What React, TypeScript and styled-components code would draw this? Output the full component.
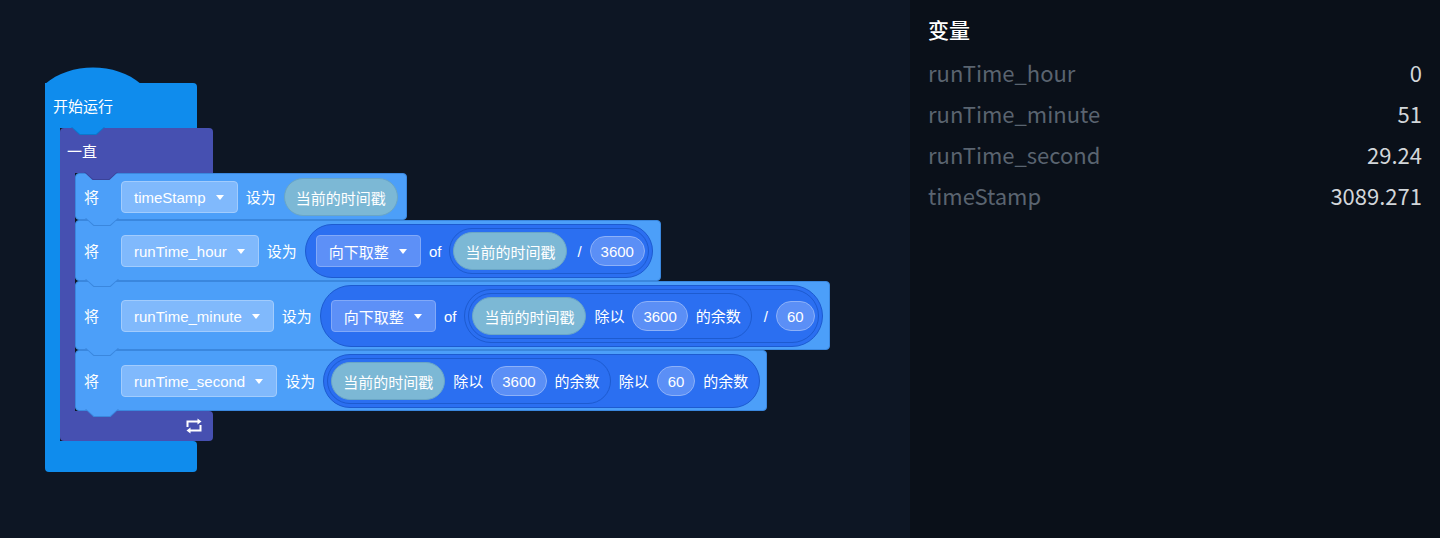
import React from 'react';
import styled, { createGlobalStyle, css } from 'styled-components';

const COLORS = {
  canvas: '#0d1624',
  panel: '#0a1019',
  hat: '#0f8ced',
  hatEdge: '#0b78cc',
  forever: '#4650b1',
  foreverEdge: '#3a4399',
  stmt: '#4c9ff9',
  stmtEdge: '#3a87de',
  field: '#80b9fc',
  fieldEdge: '#a2ccfd',
  opField: '#5d90f7',
  opFieldEdge: '#82a9f8',
  reporter: '#7cb8d5',
  reporterEdge: '#6aa6c6',
  op: '#2b6ff1',
  opEdge: '#1d5bd0',
  num: '#5b8ff6',
  numEdge: '#8db1f8',
};

const GlobalStyle = createGlobalStyle`
  html, body { margin: 0; padding: 0; background: ${COLORS.canvas}; }
  body { font-family: "Liberation Sans", "Noto Sans CJK SC", sans-serif; }
  * { box-sizing: border-box; }
`;

const Page = styled.div`
  display: flex;
  width: 1440px;
  height: 538px;
  overflow: hidden;
`;

const Canvas = styled.main`
  flex: 0 0 910px;
  background: ${COLORS.canvas};
  padding: 83px 0 0 45px;
`;

const tab = (color: string, edge: string, left: number) => css`
  &::before,
  &::after {
    content: '';
    position: absolute;
    top: calc(100% - 1px);
    clip-path: polygon(0 0, 100% 0, 75% 100%, 25% 100%);
    z-index: 3;
    pointer-events: none;
  }
  &::before {
    left: ${left - 1}px;
    width: 34px;
    height: 8px;
    background: ${edge};
  }
  &::after {
    left: ${left}px;
    width: 32px;
    height: 7px;
    background: ${color};
  }
`;

const HatBlock = styled.div`
  position: relative;
  display: flex;
  flex-direction: column;
  align-items: flex-start;
  &::before {
    content: '';
    position: absolute;
    left: 0;
    top: -16px;
    width: 96px;
    height: 17px;
    background: ${COLORS.hat};
    clip-path: path('M0 17 C 25 -5, 71 -5, 96 17 Z');
  }
`;

const CBlock = styled.div`
  display: flex;
  flex-direction: column;
  align-items: flex-start;
`;

type Kind = 'hat' | 'forever';
const kindColor = (k: Kind) => (k === 'hat' ? COLORS.hat : COLORS.forever);
const kindEdge = (k: Kind) => (k === 'hat' ? COLORS.hatEdge : COLORS.foreverEdge);

const CHead = styled.div<{ $kind: Kind }>`
  position: relative;
  display: flex;
  align-items: center;
  width: ${(p) => (p.$kind === 'hat' ? 152 : 153)}px;
  height: 45px;
  padding-left: ${(p) => (p.$kind === 'hat' ? 8 : 7)}px;
  background: ${(p) => kindColor(p.$kind)};
  color: #fff;
  font-size: 15px;
  border-radius: ${(p) => (p.$kind === 'hat' ? '0 4px 0 0' : '4px 4px 0 0')};
  ${(p) => tab(kindColor(p.$kind), kindEdge(p.$kind), p.$kind === 'hat' ? 27 : 25)}
`;

const CMouth = styled.div`
  display: flex;
  align-items: stretch;
`;

const CArm = styled.div<{ $kind: Kind }>`
  flex: 0 0 15px;
  background: ${(p) => kindColor(p.$kind)};
`;

const CFoot = styled.div<{ $kind: Kind }>`
  display: flex;
  align-items: center;
  justify-content: flex-end;
  width: ${(p) => (p.$kind === 'hat' ? 152 : 153)}px;
  height: ${(p) => (p.$kind === 'hat' ? 31 : 30)}px;
  padding-right: 10px;
  background: ${(p) => kindColor(p.$kind)};
  border-radius: 0 4px 4px 4px;
`;

const Stack = styled.div`
  display: flex;
  flex-direction: column;
  align-items: flex-start;
`;

const Statement = styled.div<{ $trail?: number }>`
  position: relative;
  display: flex;
  align-items: center;
  gap: 8px;
  min-height: 47px;
  padding: 3px ${(p) => p.$trail ?? 6}px 2px 8px;
  background: ${COLORS.stmt};
  border: 1px solid ${COLORS.stmtEdge};
  border-radius: 4px;
  color: #fff;
  font-size: 15px;
  white-space: nowrap;
  ${tab(COLORS.stmt, COLORS.stmtEdge, 10)}
`;

const Word = styled.span<{ $after?: number; $before?: number }>`
  color: #fff;
  font-size: 15px;
  line-height: 1;
  margin-left: ${(p) => p.$before ?? 0}px;
  margin-right: ${(p) => p.$after ?? 0}px;
`;

const Dropdown = styled.div<{ $op?: boolean; $inset?: number }>`
  display: inline-flex;
  align-items: center;
  gap: 10px;
  height: 32px;
  padding: 0 13px 0 12px;
  margin-left: ${(p) => p.$inset ?? 0}px;
  background: ${(p) => (p.$op ? COLORS.opField : COLORS.field)};
  border: 1px solid ${(p) => (p.$op ? COLORS.opFieldEdge : COLORS.fieldEdge)};
  border-radius: 4px;
  color: #fff;
  font-size: 15px;
`;

const Caret = styled.span`
  width: 0;
  height: 0;
  border-left: 4.5px solid transparent;
  border-right: 4.5px solid transparent;
  border-top: 5px solid #fff;
`;

const Reporter = styled.div`
  display: inline-flex;
  align-items: center;
  height: 38px;
  padding: 0 11px;
  border-radius: 19px;
  background: ${COLORS.reporter};
  border: 1px solid ${COLORS.reporterEdge};
  color: #fff;
  font-size: 15px;
`;

const NumberPill = styled.div`
  display: inline-flex;
  align-items: center;
  height: 30px;
  padding: 0 10px;
  border-radius: 15px;
  background: ${COLORS.num};
  border: 1px solid ${COLORS.numEdge};
  color: #fff;
  font-size: 15px;
`;

const OpPill = styled.div`
  display: inline-flex;
  align-items: center;
  gap: 8px;
  padding: 3px;
  border-radius: 999px;
  background: ${COLORS.op};
  border: 1px solid ${COLORS.opEdge};
`;

const Panel = styled.aside`
  flex: 1;
  background: ${COLORS.panel};
  padding: 11px 18px 0;
  font-family: "Noto Sans CJK SC", "Noto Sans", sans-serif;
`;

const PanelTitle = styled.h2`
  margin: 0 0 4px;
  height: 36px;
  line-height: 36px;
  font-size: 21px;
  font-weight: 500;
  color: #fff;
`;

const VarRow = styled.div`
  display: flex;
  justify-content: space-between;
  align-items: center;
  height: 41px;
  font-size: 22px;
`;

const VarName = styled.span`
  color: #5a6470;
`;

const VarValue = styled.span`
  color: #d2d6da;
`;

const LoopIcon = () => (
  <svg width="18" height="18" viewBox="0 0 18 18" fill="none">
    <path d="M2.5 9V4.5H13" stroke="#fff" strokeWidth="2" strokeLinecap="square" />
    <path d="M12.5 1.5L16.5 4.5L12.5 7.5Z" fill="#fff" />
    <path d="M15.5 9V13.5H5" stroke="#fff" strokeWidth="2" strokeLinecap="square" />
    <path d="M5.5 10.5L1.5 13.5L5.5 16.5Z" fill="#fff" />
  </svg>
);

const Drop = ({ label, op, inset }: { label: string; op?: boolean; inset?: number }) => (
  <Dropdown $op={op} $inset={inset}>
    <span>{label}</span>
    <Caret />
  </Dropdown>
);

const NOW = '当前的时间戳';

const variables = [
  ['runTime_hour', '0'],
  ['runTime_minute', '51'],
  ['runTime_second', '29.24'],
  ['timeStamp', '3089.271'],
];

export default function App() {
  return (
    <>
      <GlobalStyle />
      <Page>
        <Canvas>
          <HatBlock>
            <CHead $kind="hat">开始运行</CHead>
            <CMouth>
              <CArm $kind="hat" />
              <CBlock>
                <CHead $kind="forever">一直</CHead>
                <CMouth>
                  <CArm $kind="forever" />
                  <Stack>
                    <Statement $trail={8}>
                      <Word $after={14}>将</Word>
                      <Drop label="timeStamp" />
                      <Word>设为</Word>
                      <Reporter>{NOW}</Reporter>
                    </Statement>
                    <Statement $trail={7}>
                      <Word $after={14}>将</Word>
                      <Drop label="runTime_hour" />
                      <Word>设为</Word>
                      <OpPill>
                        <Drop label="向下取整" op inset={7} />
                        <Word>of</Word>
                        <OpPill>
                          <Reporter>{NOW}</Reporter>
                          <Word $before={2}>/</Word>
                          <NumberPill>3600</NumberPill>
                        </OpPill>
                      </OpPill>
                    </Statement>
                    <Statement>
                      <Word $after={14}>将</Word>
                      <Drop label="runTime_minute" />
                      <Word>设为</Word>
                      <OpPill>
                        <Drop label="向下取整" op inset={7} />
                        <Word>of</Word>
                        <OpPill>
                          <OpPill>
                            <Reporter>{NOW}</Reporter>
                            <Word>除以</Word>
                            <NumberPill>3600</NumberPill>
                            <Word $after={7}>的余数</Word>
                          </OpPill>
                          <Word $before={4}>/</Word>
                          <NumberPill>60</NumberPill>
                        </OpPill>
                      </OpPill>
                    </Statement>
                    <Statement>
                      <Word $after={14}>将</Word>
                      <Drop label="runTime_second" />
                      <Word>设为</Word>
                      <OpPill>
                        <OpPill>
                          <Reporter>{NOW}</Reporter>
                          <Word>除以</Word>
                          <NumberPill>3600</NumberPill>
                          <Word $after={7}>的余数</Word>
                        </OpPill>
                        <Word>除以</Word>
                        <NumberPill>60</NumberPill>
                        <Word $after={8}>的余数</Word>
                      </OpPill>
                    </Statement>
                  </Stack>
                </CMouth>
                <CFoot $kind="forever">
                  <LoopIcon />
                </CFoot>
              </CBlock>
            </CMouth>
            <CFoot $kind="hat" />
          </HatBlock>
        </Canvas>
        <Panel>
          <PanelTitle>变量</PanelTitle>
          {variables.map(([name, value]) => (
            <VarRow key={name}>
              <VarName>{name}</VarName>
              <VarValue>{value}</VarValue>
            </VarRow>
          ))}
        </Panel>
      </Page>
    </>
  );
}
